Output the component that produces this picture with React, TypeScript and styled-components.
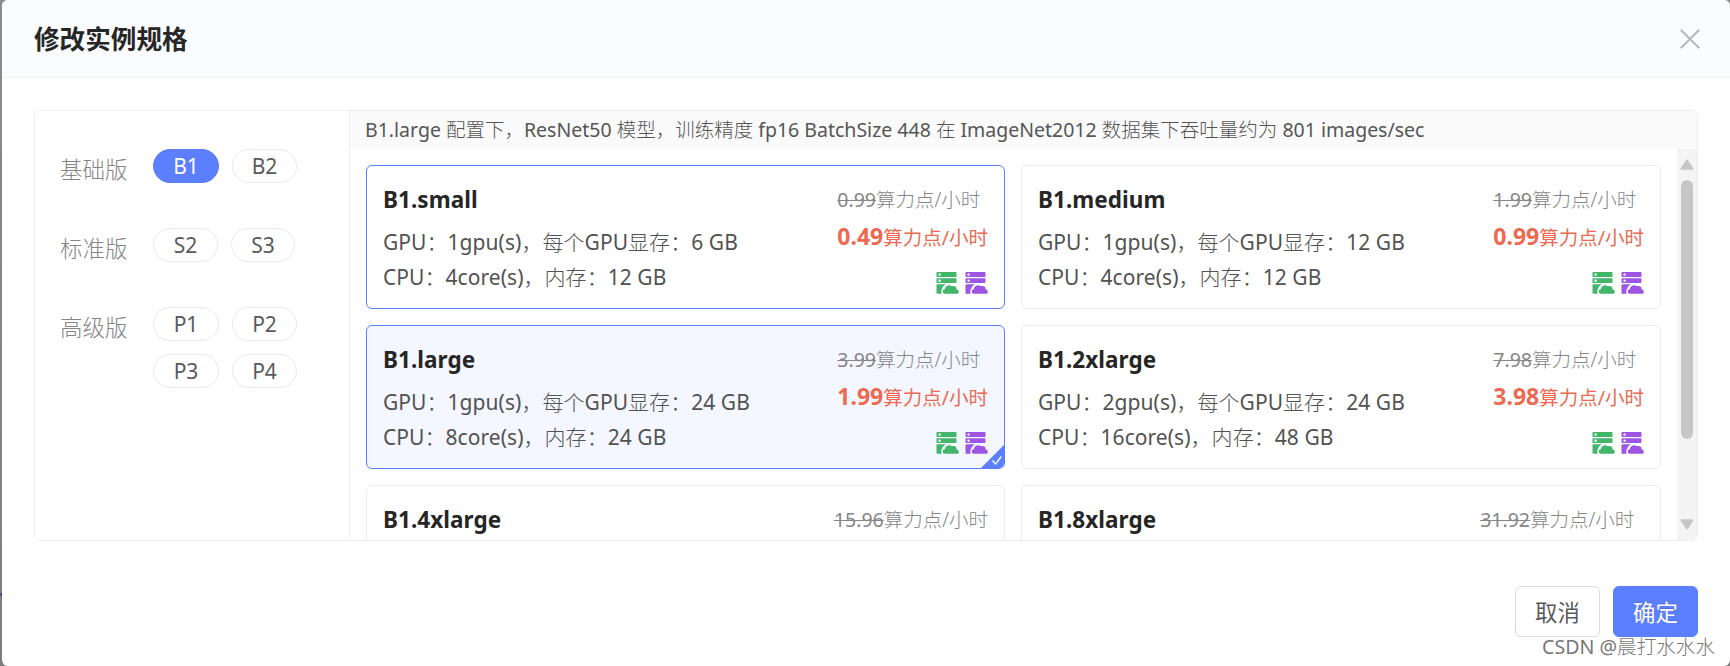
import React from 'react';
import styled, { createGlobalStyle, css } from 'styled-components';

const Global = createGlobalStyle`
  * { box-sizing: border-box; }
  html, body { margin: 0; padding: 0; }
  body {
    background: #868686;
    font-family: 'Noto Sans', 'Noto Sans CJK SC', sans-serif;
    color: #515151;
    overflow: hidden;
  }
`;

const Backdrop = styled.div`
  height: 666px;
  padding-left: 2px;
  background: linear-gradient(
    to bottom,
    #8c8c8c 0,
    #808080 593px,
    #3f4f9c 593px,
    #3f4f9c 596px,
    #808080 596px,
    #7c7c7c 666px
  );
`;

const Dialog = styled.section`
  height: 666px;
  display: flex;
  flex-direction: column;
  background: #fff;
  border-radius: 6px;
  overflow: hidden;
`;

const Header = styled.header`
  flex: none;
  height: 78px;
  display: flex;
  align-items: center;
  justify-content: space-between;
  padding: 0 30px 0 32px;
  background: #fbfcff;
  border-bottom: 1px solid #efeff2;
`;

const Title = styled.h1`
  margin: 2px 0 0;
  font-size: 25.6px;
  line-height: 36px;
  font-weight: 700;
  color: #262626;
`;

const Panel = styled.div`
  flex: none;
  height: 431px;
  margin: 32px 32px 0;
  display: flex;
  border: 1px solid #efeff1;
  border-radius: 6px;
  overflow: hidden;
`;

const Sidebar = styled.aside`
  flex: none;
  width: 315px;
  padding: 38px 0 0 25px;
  border-right: 1px solid #efeff1;
`;

const Tier = styled.div`
  display: flex;
  height: 34px;
  margin-bottom: 45px;
`;

const TierName = styled.div`
  flex: none;
  width: 93px;
  padding-top: 5px;
  font-size: 22.5px;
  line-height: 32px;
  color: #858585;
  font-weight: 300;
`;

const TierOptions = styled.div`
  display: grid;
  grid-template-columns: auto auto;
  grid-auto-rows: 34px;
  column-gap: 13px;
  row-gap: 13px;
`;

const Pill = styled.button<{ $active?: boolean; $width: number }>`
  width: ${(p) => p.$width}px;
  height: 34px;
  padding: 0;
  border: 1px solid ${(p) => (p.$active ? '#5b7fff' : '#e8e8f0')};
  border-radius: 17px;
  background: ${(p) => (p.$active ? '#5b7fff' : '#fff')};
  color: ${(p) => (p.$active ? '#fff' : '#5a5a5a')};
  font-family: inherit;
  font-size: 21px;
  line-height: 30px;
`;

const Content = styled.div`
  flex: 1;
  min-width: 0;
  display: flex;
  flex-direction: column;
`;

const Notice = styled.div`
  flex: none;
  height: 38px;
  padding-left: 15px;
  background: #fafafa;
  font-size: 19.5px;
  line-height: 38px;
  white-space: nowrap;
  color: #555;
  font-weight: 300;
`;

const ScrollArea = styled.div`
  flex: 1;
  min-height: 0;
  display: flex;
`;

const CardGrid = styled.div`
  flex: 1;
  min-height: 0;
  overflow: hidden;
  display: grid;
  grid-template-columns: 639px 640px;
  grid-auto-rows: 144px;
  gap: 16px;
  padding: 16px 0 0 16px;
`;

const Card = styled.article<{ $outlined?: boolean; $selected?: boolean }>`
  position: relative;
  display: flex;
  justify-content: space-between;
  padding: 16px 16px 0 16px;
  border: 1px solid ${(p) => (p.$outlined || p.$selected ? '#5b7fff' : '#ececee')};
  border-radius: 6px;
  background: ${(p) => (p.$selected ? '#f4f7ff' : '#fff')};
  overflow: hidden;
`;

const Specs = styled.div`
  white-space: nowrap;
  font-size: 21px;
  line-height: 35px;
  letter-spacing: 0.05px;
  color: #525252;
  font-weight: 300;
`;

const CardName = styled.h2`
  margin: 0 0 7px;
  font-size: 22.5px;
  line-height: 36px;
  font-weight: 700;
  color: #262626;
`;

const Pricing = styled.div`
  display: flex;
  flex-direction: column;
  white-space: nowrap;
  font-size: 19.5px;
  font-weight: 300;
`;

const OldPrice = styled.div`
  height: 36px;
  line-height: 36px;
  color: #868686;
  s { text-decoration-thickness: 1px; }
`;

const NewPrice = styled.div`
  height: 36px;
  line-height: 36px;
  font-weight: 400;
  color: #ee6950;
  b { font-size: 23px; font-weight: 700; }
`;

const IconRow = styled.div`
  display: flex;
  gap: 6px;
  justify-content: flex-end;
  margin-top: 18px;
`;

const SelectedCorner = styled.svg`
  position: absolute;
  right: -1px;
  bottom: -1px;
`;

const Track = styled.div`
  flex: none;
  width: 20px;
  margin-left: auto;
  display: flex;
  flex-direction: column;
  align-items: center;
  justify-content: space-between;
  padding: 10px 0 10px 0;
  background: #f4f4f4;
`;

const Thumb = styled.div`
  width: 12px;
  height: 259px;
  margin: 10px 0 auto;
  border-radius: 6px;
  background: #c6c6c6;
`;

const Footer = styled.footer`
  display: flex;
  justify-content: flex-end;
  gap: 13px;
  padding: 45px 32px 0;
`;

const Button = styled.button<{ $primary?: boolean }>`
  width: 85px;
  height: 51px;
  padding: 1px 0 0;
  border-radius: 6px;
  border: 1px solid #dcdcdf;
  background: #fff;
  color: #5a5a5a;
  font-family: inherit;
  font-size: 22.4px;
  line-height: 47px;
  box-shadow: 0 2px 2px rgba(0, 0, 0, 0.02);
  ${(p) =>
    p.$primary &&
    css`
      border-color: #5b7fff;
      background: #5b7fff;
      color: #fff;
      text-shadow: 0 -1px 0 rgba(0, 0, 0, 0.12);
    `}
`;

const Watermark = styled.div`
  position: absolute;
  left: 1542px;
  top: 633px;
  font-size: 19.6px;
  line-height: 28px;
  white-space: nowrap;
  font-weight: 300;
  color: #777;
`;

const LatinRun = styled.span`
  font-weight: 400;
`;

const Mixed = ({ children }: { children: string }) => (
  <>
    {children.split(/([\x20-\x7e]+)/).map((part, i) =>
      i % 2 ? <LatinRun key={i}>{part}</LatinRun> : part,
    )}
  </>
);

const ServerIcon = ({ color, hole }: { color: string; hole: string }) => (
  <svg width="23" height="22" viewBox="0 0 23 22">
    <rect x="0.5" y="0" width="20" height="5" rx="0.7" fill={color} />
    <rect x="0.5" y="6.3" width="20" height="4.7" rx="0.7" fill={color} />
    <path d="M1.2 12.3H10C7.6 13.4 6.6 14.9 6.2 16.4C5 18 5 20 5.8 21.8H1.2Q0.5 21.8 0.5 21V13Q0.5 12.3 1.2 12.3Z" fill={color} />
    <path d="M9.5 21.8C6 21.5 5.7 17.8 8.8 17.2C9.2 13.6 13.8 12 16 14.2C18.8 13.2 21 15 20.6 17.4C23.6 17.8 23.6 21.5 20.7 21.8Z" fill={color} />
    <circle cx="3.6" cy="2.6" r="1.2" fill={hole} />
    <circle cx="3.6" cy="8.7" r="1.2" fill={hole} />
  </svg>
);

type Spec = {
  name: string;
  gpu?: string;
  cpu?: string;
  was: string;
  now?: string;
  outlined?: boolean;
  selected?: boolean;
};

const specs: Spec[] = [
  { name: 'B1.small', gpu: 'GPU：1gpu(s)，每个GPU显存：6 GB', cpu: 'CPU：4core(s)，内存：12 GB', was: '0.99', now: '0.49', outlined: true },
  { name: 'B1.medium', gpu: 'GPU：1gpu(s)，每个GPU显存：12 GB', cpu: 'CPU：4core(s)，内存：12 GB', was: '1.99', now: '0.99' },
  { name: 'B1.large', gpu: 'GPU：1gpu(s)，每个GPU显存：24 GB', cpu: 'CPU：8core(s)，内存：24 GB', was: '3.99', now: '1.99', selected: true },
  { name: 'B1.2xlarge', gpu: 'GPU：2gpu(s)，每个GPU显存：24 GB', cpu: 'CPU：16core(s)，内存：48 GB', was: '7.98', now: '3.98' },
  { name: 'B1.4xlarge', was: '15.96', now: '7.96' },
  { name: 'B1.8xlarge', was: '31.92', now: '15.92' },
];

const tiers = [
  { name: '基础版', options: [['B1', 66], ['B2', 65]] },
  { name: '标准版', options: [['S2', 65], ['S3', 64]] },
  { name: '高级版', options: [['P1', 66], ['P2', 65], ['P3', 66], ['P4', 65]] },
] as { name: string; options: [string, number][] }[];

export default function App() {
  return (
    <Backdrop>
      <Global />
      <Dialog>
        <Header>
          <Title>修改实例规格</Title>
          <svg width="20" height="20" viewBox="0 0 20 20" fill="none" stroke="#b8b8ba" strokeWidth="2">
            <path d="M0.7 0.7L19.3 19.3M19.3 0.7L0.7 19.3" />
          </svg>
        </Header>
        <Panel>
          <Sidebar>
            {tiers.map((tier) => (
              <Tier key={tier.name}>
                <TierName>{tier.name}</TierName>
                <TierOptions>
                  {tier.options.map(([label, width]) => (
                    <Pill key={label} $width={width} $active={label === 'B1'}>
                      {label}
                    </Pill>
                  ))}
                </TierOptions>
              </Tier>
            ))}
          </Sidebar>
          <Content>
            <Notice>
              <Mixed>B1.large 配置下，ResNet50 模型，训练精度 fp16 BatchSize 448 在 ImageNet2012 数据集下吞吐量约为 801 images/sec</Mixed>
            </Notice>
            <ScrollArea>
              <CardGrid>
                {specs.map((spec) => (
                  <Card key={spec.name} $outlined={spec.outlined} $selected={spec.selected}>
                    <Specs>
                      <CardName>{spec.name}</CardName>
                      {spec.gpu && <div><Mixed>{spec.gpu}</Mixed></div>}
                      {spec.cpu && <div><Mixed>{spec.cpu}</Mixed></div>}
                    </Specs>
                    <Pricing>
                      <OldPrice>
                        <s><Mixed>{spec.was}</Mixed></s>
                        算力点/小时
                      </OldPrice>
                      <NewPrice>
                        <b>{spec.now}</b>
                        算力点/小时
                      </NewPrice>
                      <IconRow>
                        <ServerIcon color="#43b66c" hole="#fff" />
                        <ServerIcon color="#9e54e6" hole="#fff" />
                      </IconRow>
                    </Pricing>
                    {spec.selected && (
                      <SelectedCorner width="25" height="25" viewBox="0 0 25 25">
                        <path d="M25 0V25H0Z" fill="#5b7fff" />
                        <path d="M12.5 16.5L15.6 20L21.3 12.5" fill="none" stroke="#fff" strokeWidth="1.3" />
                      </SelectedCorner>
                    )}
                  </Card>
                ))}
              </CardGrid>
              <Track>
                <svg width="14" height="11" viewBox="0 0 14 11">
                  <path d="M7 1.5L12.5 9.7H1.5Z" fill="#c6c6c6" stroke="#c6c6c6" strokeWidth="2" strokeLinejoin="round" />
                </svg>
                <Thumb />
                <svg width="14" height="11" viewBox="0 0 14 11">
                  <path d="M7 9.5L12.5 1.3H1.5Z" fill="#c6c6c6" stroke="#c6c6c6" strokeWidth="2" strokeLinejoin="round" />
                </svg>
              </Track>
            </ScrollArea>
          </Content>
        </Panel>
        <Footer>
          <Button>取消</Button>
          <Button $primary>确定</Button>
        </Footer>
      </Dialog>
      <Watermark><Mixed>CSDN @晨打水水水</Mixed></Watermark>
    </Backdrop>
  );
}
